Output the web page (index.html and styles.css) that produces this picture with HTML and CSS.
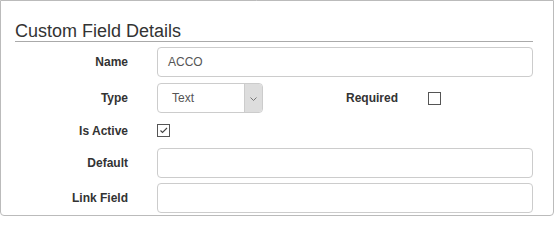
FILE: index.html
```html
<!DOCTYPE html>
<html>
<head>
<meta charset="utf-8">
<link rel="stylesheet" href="styles.css">
</head>
<body>
<div class="panel">
  <h2 class="title">Custom Field Details</h2>
  <div class="form">
    <div class="row">
      <label class="label">Name</label>
      <div class="input">ACCO</div>
    </div>
    <div class="row">
      <label class="label">Type</label>
      <div class="select">
        <span class="select-text">Text</span>
        <span class="select-arrow">
          <svg width="7" height="4" viewBox="0 0 7 4"><path d="M0.5 0.5 L3.5 3.5 L6.5 0.5" fill="none" stroke="#777" stroke-width="1"/></svg>
        </span>
      </div>
      <label class="label label-req">Required</label>
      <span class="checkbox"></span>
    </div>
    <div class="row row-check">
      <label class="label">Is Active</label>
      <span class="checkbox">
        <svg width="11" height="11" viewBox="0 0 11 11"><path d="M2.5 5.5 L4.5 7.5 L9 3" fill="none" stroke="#444" stroke-width="1.1"/></svg>
      </span>
    </div>
    <div class="row row-default">
      <label class="label">Default</label>
      <div class="input"></div>
    </div>
    <div class="row">
      <label class="label">Link Field</label>
      <div class="input"></div>
    </div>
  </div>
</div>
</body>
</html>
```

FILE: styles.css
```css
* { box-sizing: border-box; }
html, body { margin: 0; padding: 0; background: #fff; }
body {
  font-family: "Liberation Sans", Arial, sans-serif;
  color: #333;
  width: 555px;
  height: 216px;
  overflow: hidden;
}
.panel {
  width: 554px;
  height: 216px;
  border: 1px solid #bbb;
  border-radius: 0 0 4px 4px;
  padding: 21px 20px 0 14px;
}
.title {
  margin: 0;
  font-size: 18px;
  font-weight: normal;
  line-height: 19px;
  color: #333;
  border-bottom: 1px solid #aaa;
}
.form {
  padding-top: 5px;
  display: flex;
  flex-direction: column;
}
.row {
  display: flex;
  align-items: center;
  height: 30px;
  margin-bottom: 6px;
}
.row-check { height: 23px; }
.row-default { margin-bottom: 5px; }
.label {
  width: 113px;
  text-align: right;
  font-weight: bold;
  font-size: 12px;
  color: #333;
  margin-right: 29px;
  flex: none;
}
.input {
  flex: 1;
  height: 30px;
  border: 1px solid #ccc;
  border-radius: 4px;
  padding: 0 10px;
  font-size: 12px;
  color: #555;
  line-height: 28px;
}
.select {
  width: 106px;
  height: 30px;
  border: 1px solid #ccc;
  border-radius: 4px;
  display: flex;
  overflow: hidden;
  flex: none;
}
.select-text {
  flex: 1;
  padding-left: 14px;
  font-size: 12px;
  color: #555;
  line-height: 28px;
}
.select-arrow {
  width: 18px;
  background: #ddd;
  border-left: 1px solid #ccc;
  display: flex;
  align-items: center;
  justify-content: center;
  padding-top: 1px;
}
.select-arrow svg { display: block; }
.label-req {
  width: 135px;
  margin-right: 30px;
}
.checkbox {
  width: 13px;
  height: 13px;
  border: 1px solid #555;
  background: #fff;
  display: flex;
  align-items: center;
  justify-content: center;
  flex: none;
}
.checkbox svg { display: block; }
```
